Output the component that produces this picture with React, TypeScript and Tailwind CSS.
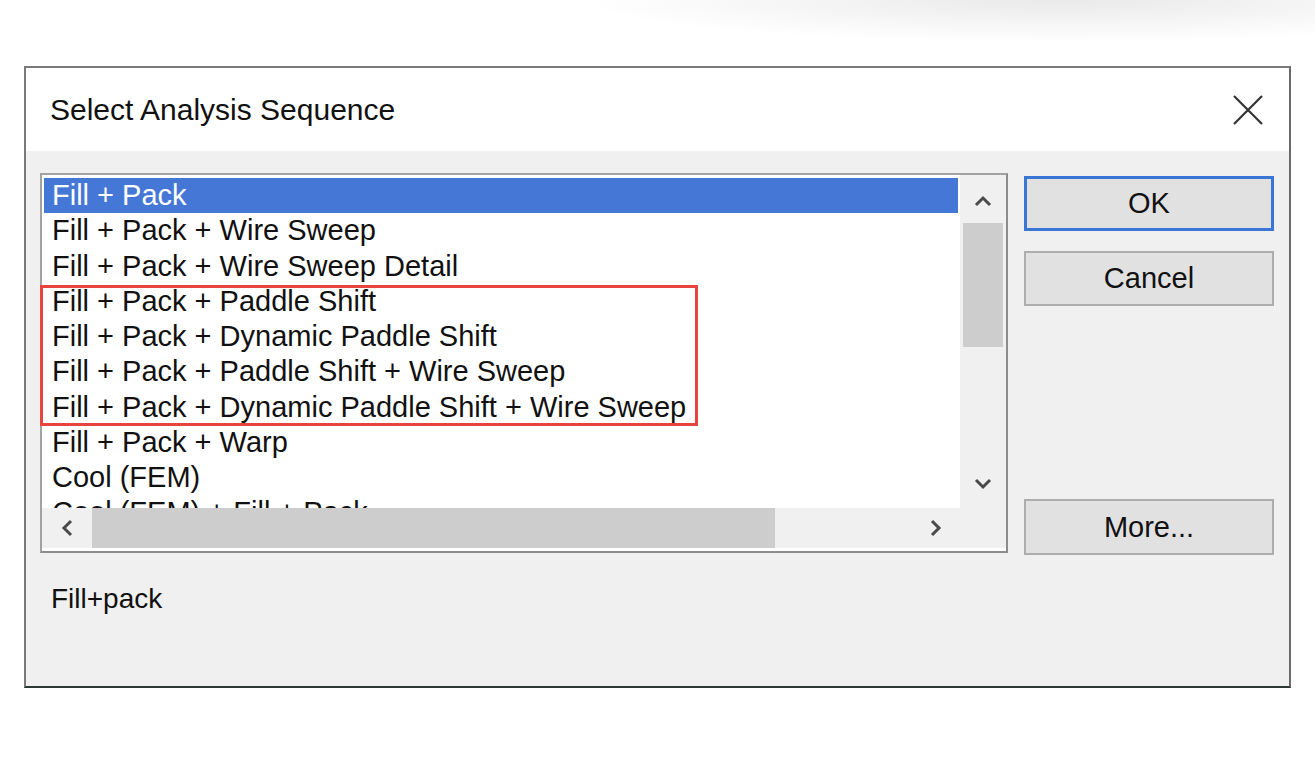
import React from 'react';

const items = [
  'Fill + Pack',
  'Fill + Pack + Wire Sweep',
  'Fill + Pack + Wire Sweep Detail',
  'Fill + Pack + Paddle Shift',
  'Fill + Pack + Dynamic Paddle Shift',
  'Fill + Pack + Paddle Shift + Wire Sweep',
  'Fill + Pack + Dynamic Paddle Shift + Wire Sweep',
  'Fill + Pack + Warp',
  'Cool (FEM)',
  'Cool (FEM) + Fill + Pack',
];

const Chevron = ({ dir }: { dir: 'up' | 'down' | 'left' | 'right' }) => {
  const d = {
    up: 'M2 12 L9 5 L16 12',
    down: 'M2 6 L9 13 L16 6',
    left: 'M12 2 L5 9 L12 16',
    right: 'M6 2 L13 9 L6 16',
  }[dir];
  return (
    <svg width="18" height="18" viewBox="0 0 18 18">
      <path d={d} fill="none" stroke="#4a4a4a" strokeWidth="3" />
    </svg>
  );
};

export default function App() {
  return (
    <div className="min-h-[762px] bg-white font-['Liberation_Sans',Arial,sans-serif] text-black">
      {/* soft shadow of something above */}
      <div className="h-[66px] bg-[radial-gradient(ellipse_480px_42px_at_1060px_0px,#e9e9e9,#ffffff)]" />

      <div className="ml-[24px] w-[1267px] h-[622px] border-2 border-[#7a7a7a] border-b-[#2d3833] border-r-[#6a6a6a] bg-[#f0f0f0] flex flex-col">
        {/* Title bar */}
        <div className="h-[83px] bg-white flex items-center justify-between pl-[24px] pr-[26px]">
          <span className="text-[30px] leading-none text-[#111]">Select Analysis Sequence</span>
          <svg width="30" height="30" viewBox="0 0 30 30">
            <path d="M1 1 L29 29 M29 1 L1 29" stroke="#333" strokeWidth="2.2" />
          </svg>
        </div>

        {/* Body */}
        <div className="flex-1 flex flex-col pl-[14px] pr-[15px] pt-[22px]">
          <div className="flex gap-[16px]">
            {/* List box */}
            <div className="relative w-[968px] h-[380px] border-2 border-[#a2a2a2] border-r-[#8c8c8c] border-b-[#8c8c8c] bg-white flex flex-col pb-[3px]">
              <div className="flex flex-1 min-h-0">
                <div className="flex-1 min-h-0 overflow-hidden pt-[3px] pl-[2px]">
                  {items.map((it, i) => (
                    <div
                      key={it}
                      className={
                        i === 0
                          ? 'h-[35.25px] w-[914px] flex items-center pl-[8px] text-[29px] leading-none bg-[#4577d6] text-white whitespace-nowrap'
                          : 'h-[35.25px] w-[914px] flex items-center pl-[8px] text-[29px] leading-none text-[#111] whitespace-nowrap'
                      }
                    >
                      {it}
                    </div>
                  ))}
                </div>
                {/* Vertical scrollbar */}
                <div className="w-[46px] bg-[#f0f0f0] flex flex-col items-center pt-[18px] pb-[16px]">
                  <Chevron dir="up" />
                  <div className="mt-[12px] w-[40px] h-[124px] bg-[#cdcdcd]" />
                  <div className="flex-1" />
                  <Chevron dir="down" />
                </div>
              </div>
              {/* Horizontal scrollbar */}
              <div className="h-[40px] bg-[#f0f0f0] flex items-center">
                <div className="w-[50px] flex justify-center pl-[2px]">
                  <Chevron dir="left" />
                </div>
                <div className="w-[683px] h-[40px] bg-[#cdcdcd]" />
                <div className="flex-1" />
                <div className="w-[50px] flex justify-center mr-[46px]">
                  <Chevron dir="right" />
                </div>
              </div>

              {/* annotation frame */}
              <div className="absolute left-[-2px] top-[110px] w-[658px] h-[141px] border-[3px] border-[#e8443e]" />
            </div>

            {/* Buttons */}
            <div className="w-[250px] flex flex-col pt-[3px]">
              <button className="h-[55px] border-[3px] border-[#3b76d6] bg-[#e1e1e1] text-[29px] leading-none text-[#111]">
                OK
              </button>
              <button className="mt-[20px] h-[55px] border-2 border-[#adadad] bg-[#e1e1e1] text-[29px] leading-none text-[#111]">
                Cancel
              </button>
              <div className="flex-1" />
              <button className="mb-[-2px] h-[56px] border-2 border-[#adadad] bg-[#e1e1e1] text-[29px] leading-none text-[#111]">
                More...
              </button>
            </div>
          </div>

          <div className="mt-[32px] pl-[11px] text-[28px] leading-none text-[#111]">Fill+pack</div>
        </div>
      </div>
    </div>
  );
}
